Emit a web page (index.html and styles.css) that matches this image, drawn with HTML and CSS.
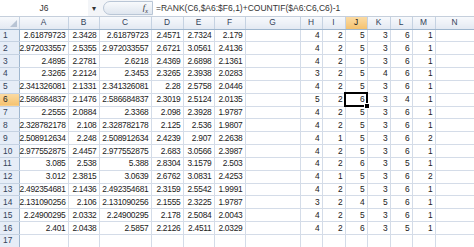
FILE: index.html
```html
<!DOCTYPE html>
<html>
<head lang="en">
    <meta charset="UTF-8">
    <title>Sheet1</title>
    <link rel="stylesheet" href="styles.css">
</head>
<body>
    <div id="formula">
        <div class="namebox">J6</div>
        <span class="drop">&#9662;</span>
        <div class="fxbox"><span class="fx">f<sub>x</sub></span></div>
        <div class="formula-text">=RANK(C6,$A6:$F6,1)+COUNTIF($A6:C6,C6)-1</div>
    </div>

    <table id="sheet">
        <colgroup>
            <col class="c-rh"><col class="c-a"><col class="c-b"><col class="c-c"><col class="c-d"><col class="c-e"><col class="c-f"><col class="c-g">
            <col class="c-n1"><col class="c-n2"><col class="c-n1"><col class="c-n2"><col class="c-n1"><col class="c-n2"><col class="c-last">
        </colgroup>
        <tr class="head">
            <th class="corner"><span class="tri"></span></th>
            <th>A</th><th>B</th><th>C</th><th>D</th><th>E</th><th>F</th><th>G</th>
            <th>H</th><th>I</th><th class="active">J</th><th>K</th><th>L</th><th>M</th><th>N</th>
        </tr>
        <tr><th>1</th><td>2.61879723</td><td>2.3428</td><td>2.61879723</td><td>2.4571</td><td>2.7324</td><td>2.179</td><td></td><td>4</td><td>2</td><td>5</td><td>3</td><td>6</td><td>1</td><td></td></tr>
        <tr><th>2</th><td>2.972033557</td><td>2.5355</td><td>2.972033557</td><td>2.6721</td><td>3.0561</td><td>2.4136</td><td></td><td>4</td><td>2</td><td>5</td><td>3</td><td>6</td><td>1</td><td></td></tr>
        <tr><th>3</th><td>2.4895</td><td>2.2781</td><td>2.6218</td><td>2.4369</td><td>2.6898</td><td>2.1361</td><td></td><td>4</td><td>2</td><td>5</td><td>3</td><td>6</td><td>1</td><td></td></tr>
        <tr><th>4</th><td>2.3265</td><td>2.2124</td><td>2.3453</td><td>2.3265</td><td>2.3938</td><td>2.0283</td><td></td><td>3</td><td>2</td><td>5</td><td>4</td><td>6</td><td>1</td><td></td></tr>
        <tr><th>5</th><td>2.341326081</td><td>2.1331</td><td>2.341326081</td><td>2.28</td><td>2.5758</td><td>2.0446</td><td></td><td>4</td><td>2</td><td>5</td><td>3</td><td>6</td><td>1</td><td></td></tr>
        <tr><th class="active">6</th><td>2.586684837</td><td>2.1476</td><td>2.586684837</td><td>2.3019</td><td>2.5124</td><td>2.0135</td><td></td><td>5</td><td>2</td><td class="selected">6<span class="handle"></span></td><td>3</td><td>4</td><td>1</td><td></td></tr>
        <tr><th>7</th><td>2.2555</td><td>2.0884</td><td>2.3368</td><td>2.098</td><td>2.3928</td><td>1.9787</td><td></td><td>4</td><td>2</td><td>5</td><td>3</td><td>6</td><td>1</td><td></td></tr>
        <tr><th>8</th><td>2.328782178</td><td>2.108</td><td>2.328782178</td><td>2.125</td><td>2.536</td><td>1.9807</td><td></td><td>4</td><td>2</td><td>5</td><td>3</td><td>6</td><td>1</td><td></td></tr>
        <tr><th>9</th><td>2.508912634</td><td>2.248</td><td>2.508912634</td><td>2.4239</td><td>2.907</td><td>2.2638</td><td></td><td>4</td><td>1</td><td>5</td><td>3</td><td>6</td><td>2</td><td></td></tr>
        <tr><th>10</th><td>2.977552875</td><td>2.4457</td><td>2.977552875</td><td>2.683</td><td>3.0566</td><td>2.3987</td><td></td><td>4</td><td>2</td><td>5</td><td>3</td><td>6</td><td>1</td><td></td></tr>
        <tr><th>11</th><td>3.085</td><td>2.538</td><td>5.388</td><td>2.8304</td><td>3.1579</td><td>2.503</td><td></td><td>4</td><td>2</td><td>6</td><td>3</td><td>5</td><td>1</td><td></td></tr>
        <tr><th>12</th><td>3.012</td><td>2.3815</td><td>3.0639</td><td>2.6762</td><td>3.0831</td><td>2.4253</td><td></td><td>4</td><td>1</td><td>5</td><td>3</td><td>6</td><td>2</td><td></td></tr>
        <tr><th>13</th><td>2.492354681</td><td>2.1436</td><td>2.492354681</td><td>2.3159</td><td>2.5542</td><td>1.9991</td><td></td><td>4</td><td>2</td><td>5</td><td>3</td><td>6</td><td>1</td><td></td></tr>
        <tr><th>14</th><td>2.131090256</td><td>2.106</td><td>2.131090256</td><td>2.1555</td><td>2.3225</td><td>1.9787</td><td></td><td>3</td><td>2</td><td>4</td><td>5</td><td>6</td><td>1</td><td></td></tr>
        <tr><th>15</th><td>2.24900295</td><td>2.0332</td><td>2.24900295</td><td>2.178</td><td>2.5084</td><td>2.0043</td><td></td><td>4</td><td>2</td><td>5</td><td>3</td><td>6</td><td>1</td><td></td></tr>
        <tr><th>16</th><td>2.401</td><td>2.0438</td><td>2.5857</td><td>2.2126</td><td>2.4511</td><td>2.0329</td><td></td><td>4</td><td>2</td><td>6</td><td>3</td><td>5</td><td>1</td><td></td></tr>
        <tr><th>17</th><td></td><td></td><td></td><td></td><td></td><td></td><td></td><td></td><td></td><td></td><td></td><td></td><td></td><td></td></tr>
        <tr><th>18</th><td></td><td></td><td></td><td></td><td></td><td></td><td></td><td></td><td></td><td></td><td></td><td></td><td></td><td></td></tr>
    </table>
</body>
</html>
```

FILE: styles.css
```css
*{
    padding:0;
    margin:0;
    box-sizing: border-box;
}
body{
    width: 474px;
    height: 247px;
    overflow: hidden;
    background: #fff;
    font-family: "Liberation Sans", Arial, sans-serif;
    color: #222;
}

/* formula bar */
#formula{
    height: 17px;
    display: flex;
    align-items: center;
    background: #f3f5f8;
    border-bottom: 1px solid #c5cfdc;
}
.namebox{
    width: 88px;
    height: 16px;
    line-height: 16px;
    text-align: center;
    font-size: 8.5px;
    color: #333;
    background: #fff;
}
.drop{
    width: 12px;
    font-size: 8px;
    color: #333;
    text-align: center;
}
.fxbox{
    width: 50px;
    height: 14px;
    margin-left: 3px;
    border-radius: 7px 0 0 7px;
    background: linear-gradient(#f8fafc, #dfe6ef);
    border: 1px solid #b9c6d6;
    display: flex;
    justify-content: flex-end;
    align-items: center;
    padding-right: 4px;
}
.fx{
    font-family: "Liberation Serif", serif;
    font-style: italic;
    font-size: 9px;
    color: #333;
}
.fx sub{
    font-size: 6px;
}
.formula-text{
    flex: 1;
    height: 16px;
    line-height: 16px;
    padding-left: 3px;
    font-size: 8.5px;
    color: #333;
    background: #fff;
    white-space: nowrap;
    overflow: hidden;
}

/* grid */
#sheet{
    border-collapse: collapse;
    table-layout: fixed;
    width: 474px;
    font-size: 8.4px;
    letter-spacing: -0.25px;
}
.c-rh{ width: 19px; }
.c-a{ width: 49px; }
.c-b{ width: 31px; }
.c-c{ width: 52px; }
.c-d{ width: 32px; }
.c-e{ width: 31px; }
.c-f{ width: 31px; }
.c-g{ width: 55px; }
.c-n1{ width: 22px; }
.c-n2{ width: 23px; }
.c-last{ width: 39px; }

#sheet tr{
    height: 12.85px;
}
#sheet td{
    border-right: 1px solid #d4dce8;
    border-bottom: 1px solid #d4dce8;
    text-align: right;
    padding: 0 2px 0 0;
    white-space: nowrap;
    overflow: visible;
    line-height: 11px;
}
#sheet th{
    font-weight: normal;
    color: #33425a;
    background: #e6edf7;
    border-right: 1px solid #9eb6ce;
    border-bottom: 1px solid #c5d2e2;
    text-align: left;
    padding-left: 3px;
    line-height: 11px;
    letter-spacing: 0;
}
#sheet .head{
    height: 12px;
}
#sheet .head th{
    text-align: center;
    padding: 0;
    background: linear-gradient(#f7f9fc, #e3e9f2);
    border-right: 1px solid #c5d2e2;
    border-bottom: 1px solid #9eb6ce;
}
#sheet .corner{
    position: relative;
    border-right: 1px solid #9eb6ce;
}
.tri{
    position: absolute;
    right: 2px;
    bottom: 2px;
    width: 0;
    height: 0;
    border-left: 7px solid transparent;
    border-bottom: 7px solid #b8c4d4;
}
#sheet th.active,
#sheet .head th.active{
    background: linear-gradient(#fbdba4, #f5c26f);
    color: #222;
}
#sheet td.selected{
    position: relative;
    outline: 2px solid #000;
    outline-offset: -1px;
}
.handle{
    position: absolute;
    right: -3px;
    bottom: -3px;
    width: 4px;
    height: 4px;
    background: #000;
    border: 1px solid #fff;
    box-sizing: content-box;
}
```
